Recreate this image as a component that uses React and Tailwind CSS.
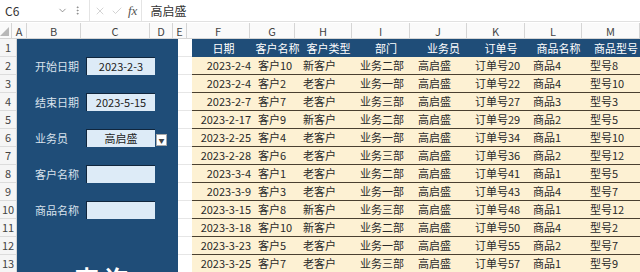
import { X, Check, ChevronDown, EllipsisVertical } from 'lucide-react';

const cols = [
  { name: 'A', w: 'w-[15px]' },
  { name: 'B', w: 'w-[54px]' },
  { name: 'C', w: 'w-[69px]' },
  { name: 'D', w: 'w-[23px]' },
  { name: 'E', w: 'w-[14px]' },
  { name: 'F', w: 'w-[63px]' },
  { name: 'G', w: 'w-[45px]' },
  { name: 'H', w: 'w-[57px]' },
  { name: 'I', w: 'w-[58px]' },
  { name: 'J', w: 'w-[57px]' },
  { name: 'K', w: 'w-[58px]' },
  { name: 'L', w: 'w-[57px]' },
  { name: 'M', w: 'w-[58px]' },
];

const headers = ['日期', '客户名称', '客户类型', '部门', '业务员', '订单号', '商品名称', '商品型号'];

const rows = [
  ['2023-2-4', '客户10', '新客户', '业务二部', '高启盛', '订单号20', '商品4', '型号8'],
  ['2023-2-4', '客户2', '老客户', '业务一部', '高启盛', '订单号22', '商品4', '型号10'],
  ['2023-2-7', '客户7', '老客户', '业务三部', '高启盛', '订单号27', '商品3', '型号3'],
  ['2023-2-17', '客户9', '新客户', '业务二部', '高启盛', '订单号29', '商品2', '型号5'],
  ['2023-2-25', '客户4', '老客户', '业务一部', '高启盛', '订单号34', '商品1', '型号10'],
  ['2023-2-28', '客户6', '老客户', '业务三部', '高启盛', '订单号36', '商品2', '型号12'],
  ['2023-3-4', '客户1', '老客户', '业务二部', '高启盛', '订单号41', '商品1', '型号5'],
  ['2023-3-9', '客户3', '老客户', '业务一部', '高启盛', '订单号43', '商品4', '型号7'],
  ['2023-3-15', '客户8', '新客户', '业务三部', '高启盛', '订单号48', '商品1', '型号12'],
  ['2023-3-18', '客户10', '新客户', '业务二部', '高启盛', '订单号50', '商品4', '型号2'],
  ['2023-3-23', '客户5', '老客户', '业务一部', '高启盛', '订单号55', '商品2', '型号7'],
  ['2023-3-25', '客户7', '老客户', '业务三部', '高启盛', '订单号57', '商品1', '型号9'],
];

// left panel fields by sheet row (1-based)
const fields = {
  2: { label: '开始日期', value: '2023-2-3' },
  4: { label: '结束日期', value: '2023-5-15' },
  6: { label: '业务员', value: '高启盛', dropdown: true },
  8: { label: '客户名称', value: '' },
  10: { label: '商品名称', value: '' },
};

function FormulaBar() {
  return (
    <div className="flex h-[22px] items-center border-b border-[#e1e1e1] bg-white text-[12px] text-[#333]">
      <div className="flex w-[72px] items-center justify-between pl-[5px] pr-[4px]">
        <span>C6</span>
        <ChevronDown size={11} strokeWidth={1.5} className="text-[#666]" />
      </div>
      <EllipsisVertical size={11} strokeWidth={2} className="text-[#888]" />
      <div className="ml-[6px] flex h-full items-center gap-[5px] border-l border-r border-[#e4e4e4] px-[4px]">
        <X size={12} strokeWidth={1.5} className="text-[#c4c4c4]" />
        <Check size={12} strokeWidth={1.5} className="text-[#c4c4c4]" />
        <span className="font-['Liberation_Serif'] text-[13px] italic text-[#555]">fx</span>
      </div>
      <div className="pl-[8px]">高启盛</div>
    </div>
  );
}

function ColumnHeaders() {
  return (
    <div className="flex h-[16px] border-b border-[#d5d5d5] bg-[#fafafa] text-[11px] leading-[16px] text-[#444]">
      <div className="relative w-[17px] border-r border-[#d5d5d5]">
        <div className="absolute bottom-[2px] right-[2px] h-0 w-0 border-b-[9px] border-l-[9px] border-b-[#b8b8b8] border-l-transparent" />
      </div>
      {cols.map((c) => (
        <div key={c.name} className={`${c.w} shrink-0 border-r border-[#d5d5d5] text-center`}>
          {c.name}
        </div>
      ))}
    </div>
  );
}

function Panel() {
  const sheetRows = Array.from({ length: 12 }, (_, i) => i + 1);
  return (
    <div className="w-[161px] shrink-0 overflow-hidden bg-[#1f4d78] text-[11px]">
      {sheetRows.map((r) => {
        const f = fields[r];
        return (
          <div key={r} className="flex h-[18px]">
            <div className="w-[15px]" />
            <div className="flex w-[54px] items-center pl-[3px] text-[#d9e2ec]">{f ? f.label : ''}</div>
            <div className="w-[69px]">
              {f && (
                <div className="flex h-[18px] items-center justify-center border-t border-l border-[#10263d] bg-[#ddebf7] text-[#222]">
                  {f.value}
                </div>
              )}
            </div>
            <div className="w-[23px]">
              {f && f.dropdown && (
                <div className="ml-[1px] mt-[5px] flex h-[12px] w-[11px] items-center justify-center border border-[#a8a8a8] bg-white text-[6px] text-[#444]">
                  ▼
                </div>
              )}
            </div>
          </div>
        );
      })}
      <div className="flex h-[18px] justify-center pl-[8px] pt-[11px] text-[24px] font-bold leading-none text-white">
        查 询
      </div>
    </div>
  );
}

function DataTable() {
  return (
    <div className="grid grid-cols-[63px_45px_57px_58px_57px_58px_57px_58px] text-[11px]">
      {headers.map((h) => (
        <div key={h} className="flex h-[18px] items-center justify-center bg-[#1f4d78] text-white">
          {h}
        </div>
      ))}
      {rows.map((row, i) =>
        row.map((cell, j) => (
          <div
            key={`${i}-${j}`}
            className={`flex h-[18px] items-center border-b border-[#4a4030] bg-[#fdf1d3] text-[#2a2a2a] ${
              j === 0 ? 'justify-end pr-[4px]' : 'pl-[3px]'
            }`}
          >
            {cell}
          </div>
        ))
      )}
    </div>
  );
}

export default function App() {
  const nums = Array.from({ length: 13 }, (_, i) => i + 1);
  return (
    <div className="h-[272px] w-[640px] overflow-hidden bg-white font-['Noto_Sans_CJK_SC',sans-serif]">
      <FormulaBar />
      <div className="h-[1px] bg-white" />
      <ColumnHeaders />
      <div className="flex">
        <div className="w-[17px] shrink-0 border-r border-[#d5d5d5] bg-[#f5f5f5] text-[11px] text-[#444]">
          {nums.map((n) => (
            <div key={n} className="flex h-[18px] items-center justify-center border-b border-[#dcdcdc]">
              {n}
            </div>
          ))}
        </div>
        <Panel />
        <div className="w-[14px] shrink-0">
          {nums.map((n) => (
            <div key={n} className="h-[18px] border-b border-[#e6e6e6]" />
          ))}
        </div>
        <DataTable />
      </div>
    </div>
  );
}
